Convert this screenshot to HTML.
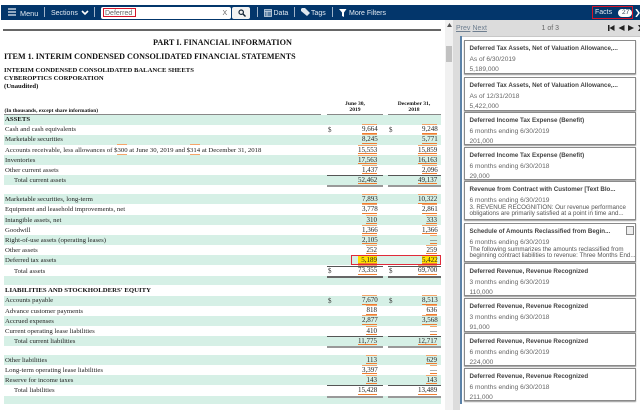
<!DOCTYPE html>
<html><head><meta charset="utf-8"><style>
html,body{margin:0;padding:0;background:#fff;width:640px;height:410px;overflow:hidden}
#p{position:relative;width:640px;height:410px;overflow:hidden;filter:blur(.3px)}
#p div,#p span,#p svg{position:absolute}
.nav{left:1px;top:5px;width:639px;height:15px;background:#03366b}
.t{font:7px/10px "Liberation Sans",sans-serif;color:#e3eaf2;white-space:nowrap;margin-top:.5px}
.dv{width:1px;height:10px;top:7px;background:#9fb3c8}
.s{font:6.75px/10px "Liberation Serif",serif;color:#222;white-space:nowrap}
.h{font-weight:bold;color:#111}
.st{left:4px;width:437px;background:#d6f0e6}
.l{left:5px;margin-top:.5px}
.i{left:14px;margin-top:.5px}
.v{height:7.5px;line-height:8px;margin-top:-.5px;text-align:right;border-top:1.5px solid #f4a469;border-bottom:1.5px solid #ee7d31;font:7px/8px "Liberation Serif",serif;color:#222}
.d{font:7px/10px "Liberation Serif",serif;color:#333}
.a{left:327px;width:56px}
.b{left:388px;width:53px}
.ln{height:1px;background:#555}
.db{height:2px;background:#999}
.c{left:464px;width:170px;background:#fff;border:1.5px solid #8a8a8a;box-shadow:0 1px 1px #999}
.ct{left:4.5px;top:2.5px;font:bold 6.2px/9px "Liberation Sans",sans-serif;color:#444;white-space:nowrap}
.cd{left:4.5px;top:13.5px;font:6.6px/9px "Liberation Sans",sans-serif;color:#666;white-space:nowrap}
.cv{left:4.5px;top:23.5px;font:6.6px/9px "Liberation Sans",sans-serif;color:#666;white-space:nowrap}
.cx{left:4.5px;top:22.5px;font:6.2px/6.5px "Liberation Sans",sans-serif;color:#555;white-space:nowrap}
</style></head><body><div id="p">
<div class="nav"></div>
<svg style="left:8px;top:8px" width="8" height="8"><path d="M0 1h8M0 4h8M0 7h8" stroke="#e6edf4" stroke-width="1.2"/></svg>
<span class="t" style="left:20px;top:8px;font-size:7.3px">Menu</span>
<div class="dv" style="left:44px"></div>
<span class="t" style="left:51px;top:8px">Sections</span>
<svg style="left:81px;top:10px" width="8" height="6"><path d="M1 1l3 3 3-3" stroke="#fff" stroke-width="1.6" fill="none"/></svg>
<div class="dv" style="left:94px"></div>
<div style="left:101px;top:7px;width:130px;height:12px;background:#fff;border-radius:2px"></div>
<div style="left:103px;top:8px;width:31px;height:7px;border:1.5px solid #d3152a"></div>
<span class="t" style="left:105px;top:8px;color:#666">Deferred</span>
<span class="t" style="left:222.5px;top:8px;color:#666">X</span>
<div style="left:232px;top:7px;width:18px;height:12px;background:#f2f2f2;border-radius:2px"></div>
<svg style="left:238px;top:9px" width="8" height="8"><circle cx="3.2" cy="3.2" r="2.2" stroke="#123" stroke-width="1.2" fill="none"/><path d="M5 5l2.5 2.5" stroke="#123" stroke-width="1.4"/></svg>
<div class="dv" style="left:257px"></div>
<svg style="left:264px;top:9px" width="8" height="8"><path d="M.5.5h7v7h-7zM.5 2.5h7M3 2.5v5" stroke="#cfdbe8" fill="#5b7fa3" stroke-width=".8"/></svg>
<span class="t" style="left:273.5px;top:8px">Data</span>
<div class="dv" style="left:294px"></div>
<svg style="left:301px;top:8px" width="9" height="9"><path d="M0 1l1-1h3l5 5-3 3-6-5z" fill="#dfe7ef"/></svg>
<span class="t" style="left:311px;top:8px">Tags</span>
<div class="dv" style="left:332px"></div>
<svg style="left:339px;top:9px" width="8" height="8"><path d="M0 0h7.5L5 3.5V8L3 7V3.5z" fill="#fff"/></svg>
<span class="t" style="left:349px;top:8px">More Filters</span>
<div style="left:592px;top:6px;width:39px;height:10.5px;border:1.5px solid #d3152a"></div>
<span class="t" style="left:595px;top:7px">Facts</span>
<div style="left:618px;top:8.5px;width:14px;height:8px;background:#fff;border-radius:4px"></div>
<span class="t" style="left:622px;top:7.5px;color:#345;font-size:6.5px">27</span>
<svg style="left:635px;top:9px" width="5" height="8"><path d="M1 0l3 4-3 4" stroke="#fff" stroke-width="1.5" fill="none"/></svg>

<div style="left:3px;top:29px;width:438px;height:1.5px;background:#666"></div>
<span class="s h" style="left:153px;top:38px;font-size:8.2px">PART I. FINANCIAL INFORMATION</span>
<span class="s h" style="left:4px;top:52px;font-size:8.1px">ITEM 1. INTERIM CONDENSED CONSOLIDATED FINANCIAL STATEMENTS</span>
<span class="s h" style="left:4px;top:65.5px;font-size:6.65px">INTERIM CONDENSED CONSOLIDATED BALANCE SHEETS</span>
<span class="s h" style="left:4px;top:73.5px;font-size:6.65px">CYBEROPTICS CORPORATION</span>
<span class="s h" style="left:4px;top:82px;font-size:6.65px">(Unaudited)</span>
<span class="s h" style="left:4.5px;top:106px;font-size:5.4px">(In thousands, except share information)</span>
<span class="s h" style="left:335px;top:102px;width:40px;text-align:center;font-size:5.6px;line-height:5.5px;white-space:normal">June 30,<br>2019</span>
<span class="s h" style="left:389px;top:102px;width:50px;text-align:center;font-size:5.6px;line-height:5.5px;white-space:normal">December 31,<br>2018</span>
<div style="left:4px;top:113.5px;width:317px;height:1px;background:#888"></div>
<div style="left:327px;top:113.5px;width:56px;height:1px;background:#888"></div>
<div style="left:388px;top:113.5px;width:53px;height:1px;background:#888"></div>

<div class="st" style="top:115px;height:9.5px"></div>
<div class="st" style="top:135px;height:10px"></div>
<div class="st" style="top:155px;height:10px"></div>
<div class="st" style="top:175px;height:10px"></div>
<div class="st" style="top:194px;height:10px"></div>
<div class="st" style="top:215px;height:10px"></div>
<div class="st" style="top:235px;height:10px"></div>
<div class="st" style="top:255px;height:10px"></div>
<div class="st" style="top:276px;height:9px"></div>
<div class="st" style="top:296px;height:10px"></div>
<div class="st" style="top:316px;height:10px"></div>
<div class="st" style="top:336px;height:10px"></div>
<div class="st" style="top:355px;height:10px"></div>
<div class="st" style="top:375px;height:10px"></div>
<div class="st" style="top:396px;height:8px"></div>

<span class="s h l" style="top:114.5px">ASSETS</span>
<span class="s l" style="top:124.5px">Cash and cash equivalents</span>
<span class="s l" style="top:134.5px">Marketable securities</span>
<span class="s l" style="top:145px">Accounts receivable, less allowances of $300 at June 30, 2019 and $314 at December 31, 2018</span>
<span class="s l" style="top:155px">Inventories</span>
<span class="s l" style="top:165px">Other current assets</span>
<span class="s i" style="top:175.5px">Total current assets</span>
<span class="s l" style="top:194.5px">Marketable securities, long-term</span>
<span class="s l" style="top:204.5px">Equipment and leasehold improvements, net</span>
<span class="s l" style="top:215px">Intangible assets, net</span>
<span class="s l" style="top:225px">Goodwill</span>
<span class="s l" style="top:235px">Right-of-use assets (operating leases)</span>
<span class="s l" style="top:245px">Other assets</span>
<span class="s l" style="top:255px">Deferred tax assets</span>
<span class="s i" style="top:266px">Total assets</span>
<span class="s h l" style="top:285.5px">LIABILITIES AND STOCKHOLDERS' EQUITY</span>
<span class="s l" style="top:295.5px">Accounts payable</span>
<span class="s l" style="top:306px">Advance customer payments</span>
<span class="s l" style="top:316px">Accrued expenses</span>
<span class="s l" style="top:326px">Current operating lease liabilities</span>
<span class="s i" style="top:336px">Total current liabilities</span>
<span class="s l" style="top:355px">Other liabilities</span>
<span class="s l" style="top:365px">Long-term operating lease liabilities</span>
<span class="s l" style="top:375px">Reserve for income taxes</span>
<span class="s i" style="top:385.5px">Total liabilities</span>

<div style="left:117px;top:144px;width:10px;height:9px;border-top:1px solid #f6a56a;border-bottom:1px solid #f6a56a"></div>
<div style="left:190px;top:144px;width:10px;height:9px;border-top:1px solid #f6a56a;border-bottom:1px solid #f6a56a"></div>

<!-- col 1 -->
<div class="v" style="left:362px;width:15px;top:124.5px">9,664</div>
<div class="v" style="left:362px;width:15px;top:134.5px">8,245</div>
<div class="v" style="left:358px;width:19px;top:145px">15,553</div>
<div class="v" style="left:358px;width:19px;top:155px">17,563</div>
<div class="v" style="left:362px;width:15px;top:165px">1,437</div>
<div class="v" style="left:358px;width:19px;top:175px">52,462</div>
<div class="v" style="left:362px;width:15px;top:194.5px">7,893</div>
<div class="v" style="left:362px;width:15px;top:204.5px">3,778</div>
<div class="v" style="left:366px;width:11px;top:215px">310</div>
<div class="v" style="left:362px;width:15px;top:225px">1,366</div>
<div class="v" style="left:362px;width:15px;top:235px">2,105</div>
<div class="v" style="left:366px;width:11px;top:245px">252</div>
<div class="v" style="left:358px;width:19px;top:255px;background:#ffe000">5,189</div>
<div class="v" style="left:358px;width:19px;top:265.5px">73,355</div>
<div class="v" style="left:362px;width:15px;top:295.5px">7,670</div>
<div class="v" style="left:366px;width:11px;top:305.5px">818</div>
<div class="v" style="left:362px;width:15px;top:315.5px">2,877</div>
<div class="v" style="left:366px;width:11px;top:326px">410</div>
<div class="v" style="left:358px;width:19px;top:336px">11,775</div>
<div class="v" style="left:366px;width:11px;top:355px">113</div>
<div class="v" style="left:362px;width:15px;top:365px">3,397</div>
<div class="v" style="left:366px;width:11px;top:375px">143</div>
<div class="v" style="left:358px;width:19px;top:385.5px">15,428</div>
<!-- col 2 -->
<div class="v" style="left:422px;width:15px;top:124.5px">9,248</div>
<div class="v" style="left:422px;width:15px;top:134.5px">5,771</div>
<div class="v" style="left:418px;width:19px;top:145px">15,859</div>
<div class="v" style="left:418px;width:19px;top:155px">16,163</div>
<div class="v" style="left:422px;width:15px;top:165px">2,096</div>
<div class="v" style="left:418px;width:19px;top:175px">49,137</div>
<div class="v" style="left:418px;width:19px;top:194.5px">10,322</div>
<div class="v" style="left:422px;width:15px;top:204.5px">2,861</div>
<div class="v" style="left:426px;width:11px;top:215px">333</div>
<div class="v" style="left:422px;width:15px;top:225px">1,366</div>
<div class="v" style="left:430px;width:7px;top:235px">—</div>
<div class="v" style="left:426px;width:11px;top:245px">259</div>
<div class="v" style="left:422px;width:15px;top:255px;background:#ffe000">5,422</div>
<div class="v" style="left:418px;width:19px;top:265.5px">69,700</div>
<div class="v" style="left:422px;width:15px;top:295.5px">8,513</div>
<div class="v" style="left:426px;width:11px;top:305.5px">636</div>
<div class="v" style="left:422px;width:15px;top:315.5px">3,568</div>
<div class="v" style="left:430px;width:7px;top:326px">—</div>
<div class="v" style="left:418px;width:19px;top:336px">12,717</div>
<div class="v" style="left:426px;width:11px;top:355px">629</div>
<div class="v" style="left:430px;width:7px;top:365px">—</div>
<div class="v" style="left:426px;width:11px;top:375px">143</div>
<div class="v" style="left:418px;width:19px;top:385.5px">13,489</div>

<span class="d" style="left:328px;top:124.5px">$</span><span class="d" style="left:389px;top:124.5px">$</span>
<span class="d" style="left:328px;top:265.5px">$</span><span class="d" style="left:389px;top:265.5px">$</span>
<span class="d" style="left:328px;top:295.5px">$</span><span class="d" style="left:389px;top:295.5px">$</span>

<div class="ln a" style="top:174.5px"></div><div class="ln b" style="top:174.5px"></div>
<div class="db a" style="top:185px"></div><div class="db b" style="top:185px"></div>
<div class="ln a" style="top:265.5px"></div><div class="ln b" style="top:265.5px"></div>
<div class="db a" style="top:275.5px;background:#666"></div><div class="db b" style="top:275.5px;background:#666"></div>
<div class="ln a" style="top:336px"></div><div class="ln b" style="top:336px"></div>
<div class="db a" style="top:346px"></div><div class="db b" style="top:346px"></div>
<div class="ln a" style="top:385px"></div><div class="ln b" style="top:385px"></div>
<div class="db a" style="top:395.5px"></div><div class="db b" style="top:395.5px"></div>

<div style="left:351px;top:255px;width:88px;height:7.5px;border:1.5px solid #e02a3a"></div>

<!-- scrollbar -->
<div style="left:445px;top:20px;width:8px;height:390px;background:#f1f1f1"></div>
<svg style="left:447px;top:23px" width="5" height="4"><path d="M2.5 0L5 4H0z" fill="#555"/></svg>
<div style="left:446px;top:46px;width:6px;height:16px;background:#c1c1c1"></div>

<!-- right panel -->
<div style="left:453px;top:20px;width:187px;height:16px;background:#dcdcdc"></div>
<div style="left:453px;top:36px;width:7px;height:374px;background:#dcdcdc"></div>
<div style="left:460px;top:36px;width:1.5px;height:368px;background:#5b82a8"></div>
<div style="left:461.5px;top:36px;width:178.5px;height:1px;background:#c8c8c8"></div>
<span class="t" style="left:456px;top:23px;color:#6f7f90;font-size:7px;text-decoration:underline">Prev</span>
<span class="t" style="left:472.5px;top:23px;color:#6f7f90;font-size:7px;text-decoration:underline">Next</span>
<span class="t" style="left:541.5px;top:23px;color:#666;font-size:7px">1 of 3</span>
<svg style="left:608px;top:25px" width="32" height="7"><path d="M0 0h1.5v6H0zM6.5 0v6L1.5 3zM16.5 0v6l-6-3zM20 0v6l6-3zM30 0v6l2-3zM30 0h2v6h-2z" fill="#222"/></svg>

<div class="c" style="top:40px;height:31.5px"><span class="ct">Deferred Tax Assets, Net of Valuation Allowance,...</span><span class="cd">As of 6/30/2019</span><span class="cv">5,189,000</span></div>
<div class="c" style="top:77px;height:31.5px"><span class="ct">Deferred Tax Assets, Net of Valuation Allowance,...</span><span class="cd">As of 12/31/2018</span><span class="cv">5,422,000</span></div>
<div class="c" style="top:112px;height:30.5px"><span class="ct">Deferred Income Tax Expense (Benefit)</span><span class="cd">6 months ending 6/30/2019</span><span class="cv">201,000</span></div>
<div class="c" style="top:147px;height:30.5px"><span class="ct">Deferred Income Tax Expense (Benefit)</span><span class="cd">6 months ending 6/30/2018</span><span class="cv">29,000</span></div>
<div class="c" style="top:181px;height:36.5px"><span class="ct">Revenue from Contract with Customer [Text Blo...</span><span class="cd">6 months ending 6/30/2019</span><span class="cx">3. REVENUE RECOGNITION: Our revenue performance<br>obligations are primarily satisfied at a point in time and...</span></div>
<div class="c" style="top:223px;height:36.5px"><span class="ct">Schedule of Amounts Reclassified from Begin...</span><span class="cd">6 months ending 6/30/2019</span><span class="cx">The following summarizes the amounts reclassified from<br>beginning contract liabilities to revenue: Three Months End...</span><div style="right:1px;top:1.5px;width:6px;height:7px;border:1px solid #888;background:#eee"></div></div>
<div class="c" style="top:263px;height:30.5px"><span class="ct">Deferred Revenue, Revenue Recognized</span><span class="cd">3 months ending 6/30/2019</span><span class="cv">110,000</span></div>
<div class="c" style="top:298px;height:31.5px"><span class="ct">Deferred Revenue, Revenue Recognized</span><span class="cd">3 months ending 6/30/2018</span><span class="cv">91,000</span></div>
<div class="c" style="top:333px;height:30.5px"><span class="ct">Deferred Revenue, Revenue Recognized</span><span class="cd">6 months ending 6/30/2019</span><span class="cv">224,000</span></div>
<div class="c" style="top:368px;height:30.5px"><span class="ct">Deferred Revenue, Revenue Recognized</span><span class="cd">6 months ending 6/30/2018</span><span class="cv">211,000</span></div>
</div></body></html>
